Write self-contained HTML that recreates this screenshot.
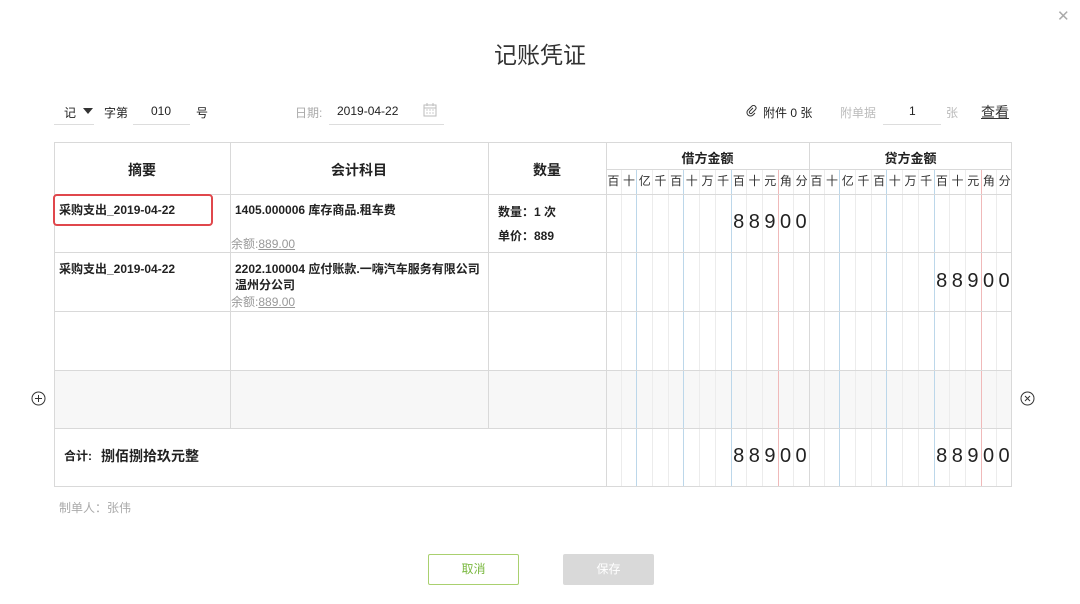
<!DOCTYPE html>
<html><head><meta charset="utf-8"><style>
*{margin:0;padding:0;box-sizing:border-box}
body{width:1080px;height:604px;background:#fff;position:relative;font-family:"Liberation Sans","Noto Sans CJK SC",sans-serif;color:#222;overflow:hidden}
.a{position:absolute}
.t{font-size:12px;white-space:nowrap}
.hl{position:absolute;left:54px;width:958px;height:1px;background:#d9d9d9}
.vl{position:absolute;width:1px;background:#d9d9d9}
.cols{position:absolute;top:169px;height:317px;width:203px;display:flex}
.cols div{flex:1;border-right:1px solid #ececec;font-size:12px;text-align:center;line-height:25px;color:#333}
.cols div:nth-child(2),.cols div:nth-child(5),.cols div:nth-child(8){border-right-color:#bcd7ea}
.cols div:nth-child(11){border-right-color:#f0b9b9}
.cols div:nth-child(13){border-right:none}
.dig{position:absolute;width:203px;display:flex;font-size:20px;letter-spacing:0}
.dig span{flex:1;text-align:center}
.ul{border-bottom:1px solid #ddd}
</style></head><body>
<div class="a" style="left:1057px;top:7px;font-size:15px;color:#aaa">✕</div>
<div class="a" style="left:0;width:1080px;top:36px;text-align:center;font-size:23px;color:#333">记账凭证</div>

<div class="a ul" style="left:54px;top:98px;width:40px;height:27px"></div>
<div class="a t" style="left:64px;top:104px">记</div>
<div class="a" style="left:83px;top:108px;width:0;height:0;border-left:5px solid transparent;border-right:5px solid transparent;border-top:6px solid #333"></div>
<div class="a t" style="left:104px;top:104px">字第</div>
<div class="a ul" style="left:133px;top:98px;width:57px;height:27px"></div>
<div class="a t" style="left:151px;top:104px">010</div>
<div class="a t" style="left:196px;top:104px">号</div>
<div class="a t" style="left:295px;top:104px;color:#aaa">日期:</div>
<div class="a ul" style="left:329px;top:98px;width:115px;height:27px"></div>
<div class="a t" style="left:337px;top:104px">2019-04-22</div>
<svg class="a" style="left:423px;top:103px" width="14" height="14" viewBox="0 0 14 14"><rect x="1" y="2" width="12" height="11" fill="none" stroke="#bbb"/><line x1="1" y1="5" x2="13" y2="5" stroke="#bbb"/><line x1="4" y1="0" x2="4" y2="3" stroke="#bbb"/><line x1="10" y1="0" x2="10" y2="3" stroke="#bbb"/><path d="M3 7h2M6 7h2M9 7h2M3 10h2M6 10h2M9 10h2" stroke="#ccc"/></svg>

<svg class="a" style="left:746px;top:105px" width="12" height="12" viewBox="0 0 12 12"><path d="M7 3L3.5 6.5a1.5 1.5 0 0 0 2 2L9.5 4.5a2.5 2.5 0 0 0-3.5-3.5L2 5a3.5 3.5 0 0 0 5 5l2-2" fill="none" stroke="#333"/></svg>
<div class="a t" style="left:763px;top:104px">附件 0 张</div>
<div class="a t" style="left:840px;top:104px;color:#bbb">附单据</div>
<div class="a ul" style="left:883px;top:98px;width:58px;height:27px"></div>
<div class="a t" style="left:909px;top:104px">1</div>
<div class="a t" style="left:946px;top:104px;color:#bbb">张</div>
<div class="a" style="left:981px;top:102px;font-size:14px;text-decoration:underline;color:#333">查看</div>

<div class="a" style="left:54px;top:370px;width:958px;height:58px;background:#f7f7f7"></div>
<div class="cols" style="left:606px"><div>百</div><div>十</div><div>亿</div><div>千</div><div>百</div><div>十</div><div>万</div><div>千</div><div>百</div><div>十</div><div>元</div><div>角</div><div>分</div></div>
<div class="cols" style="left:809px"><div>百</div><div>十</div><div>亿</div><div>千</div><div>百</div><div>十</div><div>万</div><div>千</div><div>百</div><div>十</div><div>元</div><div>角</div><div>分</div></div>
<div class="hl" style="top:142px"></div>
<div class="hl" style="top:169px;left:606px;width:406px"></div>
<div class="hl" style="top:194px"></div>
<div class="hl" style="top:252px"></div>
<div class="hl" style="top:311px"></div>
<div class="hl" style="top:370px"></div>
<div class="hl" style="top:428px"></div>
<div class="hl" style="top:486px"></div>
<div class="vl" style="left:54px;top:142px;height:344px"></div>
<div class="vl" style="left:230px;top:142px;height:286px"></div>
<div class="vl" style="left:488px;top:142px;height:286px"></div>
<div class="vl" style="left:606px;top:142px;height:344px"></div>
<div class="vl" style="left:809px;top:142px;height:344px"></div>
<div class="vl" style="left:1011px;top:142px;height:344px"></div>

<div class="a" style="left:54px;width:176px;top:160px;text-align:center;font-size:14px;font-weight:bold">摘要</div>
<div class="a" style="left:230px;width:258px;top:160px;text-align:center;font-size:14px;font-weight:bold">会计科目</div>
<div class="a" style="left:488px;width:118px;top:160px;text-align:center;font-size:14px;font-weight:bold">数量</div>
<div class="a" style="left:606px;width:203px;top:148px;text-align:center;font-size:13px;font-weight:bold">借方金额</div>
<div class="a" style="left:809px;width:203px;top:148px;text-align:center;font-size:13px;font-weight:bold">贷方金额</div>

<div class="a" style="left:53px;top:194px;width:160px;height:32px;border:2px solid #e0474c;border-radius:4px"></div>
<div class="a t" style="left:59px;top:201px;font-weight:bold">采购支出_2019-04-22</div>
<div class="a t" style="left:235px;top:201px;font-weight:bold">1405.000006 库存商品.租车费</div>
<div class="a t" style="left:231px;top:235px;color:#999">余额:<u>889.00</u></div>
<div class="a t" style="left:498px;top:203px;font-weight:bold">数量：1 次</div>
<div class="a t" style="left:498px;top:227px;font-weight:bold">单价：889</div>
<div class="a t" style="left:59px;top:260px;font-weight:bold">采购支出_2019-04-22</div>
<div class="a t" style="left:235px;top:260px;font-weight:bold">2202.100004 应付账款.一嗨汽车服务有限公司</div>
<div class="a t" style="left:235px;top:276px;font-weight:bold">温州分公司</div>
<div class="a t" style="left:231px;top:293px;color:#999">余额:<u>889.00</u></div>
<div class="a" style="left:64px;top:447px;font-size:12px;font-weight:bold">合计:</div>
<div class="a" style="left:101px;top:446px;font-size:14px;font-weight:bold">捌佰捌拾玖元整</div>

<div class="dig" style="left:606px;top:211px"><span></span><span></span><span></span><span></span><span></span><span></span><span></span><span></span><span>8</span><span>8</span><span>9</span><span>0</span><span>0</span></div>
<div class="dig" style="left:809px;top:270px"><span></span><span></span><span></span><span></span><span></span><span></span><span></span><span></span><span>8</span><span>8</span><span>9</span><span>0</span><span>0</span></div>
<div class="dig" style="left:606px;top:445px"><span></span><span></span><span></span><span></span><span></span><span></span><span></span><span></span><span>8</span><span>8</span><span>9</span><span>0</span><span>0</span></div>
<div class="dig" style="left:809px;top:445px"><span></span><span></span><span></span><span></span><span></span><span></span><span></span><span></span><span>8</span><span>8</span><span>9</span><span>0</span><span>0</span></div>

<svg class="a" style="left:31px;top:391px" width="15" height="15" viewBox="0 0 15 15"><circle cx="7.5" cy="7.5" r="6.5" fill="none" stroke="#333"/><path d="M7.5 4v7M4 7.5h7" stroke="#333"/></svg>
<svg class="a" style="left:1020px;top:391px" width="15" height="15" viewBox="0 0 15 15"><circle cx="7.5" cy="7.5" r="6.5" fill="none" stroke="#333"/><path d="M5 5l5 5M10 5l-5 5" stroke="#333"/></svg>

<div class="a t" style="left:59px;top:499px;color:#aaa">制单人：张伟</div>
<div class="a" style="left:428px;top:554px;width:91px;height:31px;border:1px solid #a9d06f;border-radius:2px;text-align:center;line-height:29px;font-size:12px;color:#7ab83f">取消</div>
<div class="a" style="left:563px;top:554px;width:91px;height:31px;background:#d9d9d9;border-radius:2px;text-align:center;line-height:31px;font-size:12px;color:#fff">保存</div>
</body></html>
